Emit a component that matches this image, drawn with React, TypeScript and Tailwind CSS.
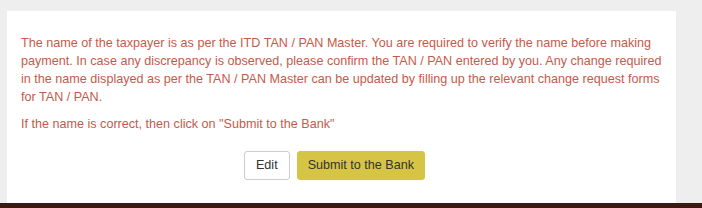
export default function App() {
    return (
        <div className="h-[208px] w-full bg-[#eeeeee] flex flex-col font-[family-name:'Liberation_Sans',Arial,sans-serif] overflow-hidden">
            <div className="h-[11px] shrink-0" />
            <div className="ml-[7px] w-[669px] h-[192px] bg-white px-[14px] pt-[23px] shrink-0">
                <p className="text-[12.6px] leading-[18px] text-[#c55a4b]">
                    The name of the taxpayer is as per the ITD TAN / PAN Master. You are required to verify the name before making
                    payment. In case any discrepancy is observed, please confirm the TAN / PAN entered by you. Any change required
                    in the name displayed as per the TAN / PAN Master can be updated by filling up the relevant change request forms
                    for TAN / PAN.
                </p>
                <p className="mt-[9px] text-[12.6px] leading-[18px] text-[#c55a4b]">
                    If the name is correct, then click on "Submit to the Bank"
                </p>
                <div className="mt-[18px] flex justify-center gap-[7px] pr-[14px]">
                    <button className="h-[29px] px-[11px] bg-white border border-[#cccccc] rounded-[3px] text-[12.6px] text-[#333333]">
                        Edit
                    </button>
                    <button className="h-[29px] px-[10px] bg-[#d6c445] border border-[#d6c445] rounded-[3px] text-[12.6px] text-[#333333]">
                        Submit to the Bank
                    </button>
                </div>
            </div>
            <div className="h-[5px] w-full bg-[#3c1a12] shrink-0" />
        </div>
    )
}
